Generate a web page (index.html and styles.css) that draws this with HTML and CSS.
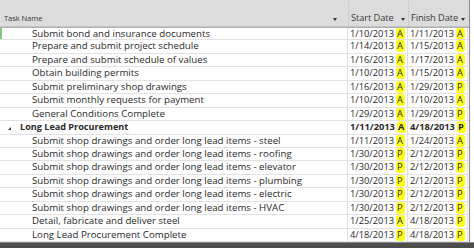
FILE: index.html
```html
<!DOCTYPE html>
<html>
<head>
<meta charset="utf-8">
<link rel="stylesheet" href="styles.css">
</head>
<body>
<div class="frame">
  <div class="sheet">
    <div class="row head">
      <div class="cell name"><span class="htext">Task Name</span><span class="arrow"></span></div>
      <div class="cell date"><span class="htext">Start Date</span><span class="arrow"></span></div>
      <div class="cell date"><span class="htext">Finish Date</span><span class="arrow"></span></div>
    </div>
    <div class="row sel">
      <div class="cell name sub">Submit bond and insurance documents</div>
      <div class="cell date">1/10/2013<span class="hl">A</span></div>
      <div class="cell date">1/11/2013<span class="hl">A</span></div>
    </div>
    <div class="row">
      <div class="cell name sub">Prepare and submit project schedule</div>
      <div class="cell date">1/14/2013<span class="hl">A</span></div>
      <div class="cell date">1/15/2013<span class="hl">A</span></div>
    </div>
    <div class="row">
      <div class="cell name sub">Prepare and submit schedule of values</div>
      <div class="cell date">1/16/2013<span class="hl">A</span></div>
      <div class="cell date">1/17/2013<span class="hl">A</span></div>
    </div>
    <div class="row">
      <div class="cell name sub">Obtain building permits</div>
      <div class="cell date">1/10/2013<span class="hl">A</span></div>
      <div class="cell date">1/15/2013<span class="hl">A</span></div>
    </div>
    <div class="row">
      <div class="cell name sub">Submit preliminary shop drawings</div>
      <div class="cell date">1/16/2013<span class="hl">A</span></div>
      <div class="cell date">1/29/2013<span class="hl">P</span></div>
    </div>
    <div class="row">
      <div class="cell name sub">Submit monthly requests for payment</div>
      <div class="cell date">1/10/2013<span class="hl">A</span></div>
      <div class="cell date">1/10/2013<span class="hl">A</span></div>
    </div>
    <div class="row">
      <div class="cell name sub">General Conditions Complete</div>
      <div class="cell date">1/29/2013<span class="hl">A</span></div>
      <div class="cell date">1/29/2013<span class="hl">P</span></div>
    </div>
    <div class="row bold">
      <div class="cell name group"><span class="tri"></span>Long Lead Procurement</div>
      <div class="cell date">1/11/2013<span class="hl">A</span></div>
      <div class="cell date">4/18/2013<span class="hl">P</span></div>
    </div>
    <div class="row">
      <div class="cell name sub">Submit shop drawings and order long lead items - steel</div>
      <div class="cell date">1/11/2013<span class="hl">A</span></div>
      <div class="cell date">1/24/2013<span class="hl">A</span></div>
    </div>
    <div class="row">
      <div class="cell name sub">Submit shop drawings and order long lead items - roofing</div>
      <div class="cell date">1/30/2013<span class="hl">P</span></div>
      <div class="cell date">2/12/2013<span class="hl">P</span></div>
    </div>
    <div class="row">
      <div class="cell name sub">Submit shop drawings and order long lead items - elevator</div>
      <div class="cell date">1/30/2013<span class="hl">P</span></div>
      <div class="cell date">2/12/2013<span class="hl">P</span></div>
    </div>
    <div class="row">
      <div class="cell name sub">Submit shop drawings and order long lead items - plumbing</div>
      <div class="cell date">1/30/2013<span class="hl">P</span></div>
      <div class="cell date">2/12/2013<span class="hl">P</span></div>
    </div>
    <div class="row">
      <div class="cell name sub">Submit shop drawings and order long lead items - electric</div>
      <div class="cell date">1/30/2013<span class="hl">P</span></div>
      <div class="cell date">2/12/2013<span class="hl">P</span></div>
    </div>
    <div class="row">
      <div class="cell name sub">Submit shop drawings and order long lead items - HVAC</div>
      <div class="cell date">1/30/2013<span class="hl">P</span></div>
      <div class="cell date">2/12/2013<span class="hl">P</span></div>
    </div>
    <div class="row">
      <div class="cell name sub">Detail, fabricate and deliver steel</div>
      <div class="cell date">1/25/2013<span class="hl">A</span></div>
      <div class="cell date">4/18/2013<span class="hl">P</span></div>
    </div>
    <div class="row">
      <div class="cell name sub">Long Lead Procurement Complete</div>
      <div class="cell date">4/18/2013<span class="hl">P</span></div>
      <div class="cell date">4/18/2013<span class="hl">P</span></div>
    </div>
  </div>
  <div class="bottom"></div>
</div>
</body>
</html>
```

FILE: styles.css
```css
html, body {
  margin: 0;
  padding: 0;
  background: #ffffff;
}
body {
  width: 474px;
  height: 248px;
  overflow: hidden;
  font-family: "Open Sans", "Noto Sans", sans-serif;
  color: #2a2a2a;
}
.frame {
  display: flex;
  flex-direction: column;
  width: 474px;
  height: 248px;
}
.sheet {
  flex: 1;
  display: flex;
  flex-direction: column;
  width: 469px;
  border-right: 1px solid #8a8a8a;
}
.row {
  display: grid;
  grid-template-columns: 348px 60px 60px;
  height: 13.45px;
  border-bottom: 1px solid #e2e2e2;
  box-sizing: border-box;
  font-size: 9.7px;
  line-height: 12.4px;
}
.row.head {
  height: 27px;
  background: #dcdcdc;
  border-bottom: 1px solid #c4c4c4;
  font-size: 7.6px;
  letter-spacing: -0.1px;
  color: #3a3a3a;
}
.head .cell {
  position: relative;
  height: 100%;
  display: flex;
  align-items: flex-end;
  padding-bottom: 2px;
  box-sizing: border-box;
  border-right: none;
}
.head .name { padding-left: 4px; }
.head .date { padding-left: 3px; border-left: 1px solid #cfcfcf; }
.arrow {
  position: absolute;
  right: 11px;
  bottom: 5px;
  width: 0;
  height: 0;
  border-left: 2.5px solid transparent;
  border-right: 2.5px solid transparent;
  border-top: 3px solid #333;
}
.head .date .arrow { right: 3px; }
.cell {
  white-space: nowrap;
  overflow: hidden;
  border-right: 1px solid #e2e2e2;
  box-sizing: border-box;
}
.cell.date {
  padding-left: 2px;
  font-size: 9.3px;
}
.sub { padding-left: 32px; }
.group { padding-left: 8px; display: flex; align-items: center; font-size: 9.1px; }
.bold { font-weight: 700; }
.tri {
  width: 0;
  height: 0;
  border-left: 3px solid transparent;
  border-bottom: 3px solid #333;
  margin-right: 9px;
  margin-top: 2px;
}
.row.sel {
  border-top: 1px solid #b0b0b0;
  box-shadow: inset 2px 0 0 #7fc77f;
}
.hl {
  display: inline-block;
  background: #ffff1e;
  border-radius: 3px;
  padding: 0 2px 0 1px;
  margin-left: 2px;
  line-height: 12px;
}
.bottom {
  height: 6px;
  background: #4d4d4d;
  border-top: 1px solid #8a8a8a;
}
```
